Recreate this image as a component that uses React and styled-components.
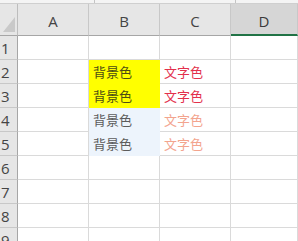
import React from 'react'
import styled, { createGlobalStyle } from 'styled-components'

const GlobalStyle = createGlobalStyle`
  html, body {
    margin: 0;
    padding: 0;
    background: #ffffff;
    overflow: hidden;
  }
`

const columns = ['A', 'B', 'C', 'D']

// only B and C hold content
const cells = {
  2: { B: { text: '背景色', bg: '#ffff00', color: '#4d4d14' }, C: { text: '文字色', color: '#e3304c' } },
  3: { B: { text: '背景色', bg: '#ffff00', color: '#4d4d14' }, C: { text: '文字色', color: '#e3304c' } },
  4: { B: { text: '背景色', bg: '#edf4fc', color: '#5c5c5c' }, C: { text: '文字色', color: '#f3a48e' } },
  5: { B: { text: '背景色', bg: '#edf4fc', color: '#5c5c5c' }, C: { text: '文字色', color: '#f3a48e' } }
}

const rows = [1, 2, 3, 4, 5, 6, 7, 8, 9]

const App = () => (
  <Sheet>
    <GlobalStyle />
    <TopStrip>
      <Tick style={{ left: 94 }} />
      <Tick style={{ left: 235 }} />
    </TopStrip>
    <Grid>
      <Corner>
        <svg width="12" height="15" viewBox="0 0 12 15">
          <polygon points="12,0 12,15 0,15" fill="#c9c9c9" />
        </svg>
      </Corner>
      {columns.map(col => (
        <ColHeader key={col} selected={col === 'D'}>
          {col}
        </ColHeader>
      ))}
      {rows.map(row => (
        <React.Fragment key={row}>
          <RowHeader>{row}</RowHeader>
          {columns.map(col => {
            const cell = cells[row] && cells[row][col]
            return (
              <Cell key={col} fill={cell && cell.bg} ink={cell && cell.color}>
                {cell ? cell.text : ''}
              </Cell>
            )
          })}
        </React.Fragment>
      ))}
    </Grid>
  </Sheet>
)

const Sheet = styled.div`
  width: 298px;
  height: 241px;
  overflow: hidden;
  background: #ffffff;
`

const TopStrip = styled.div`
  position: relative;
  height: 3px;
  background: #f4f4f4;
  border-bottom: 1px solid #cfcfcf;
`

const Tick = styled.span`
  position: absolute;
  top: 0;
  width: 1px;
  height: 3px;
  background: #c4c4c4;
`

const Grid = styled.div`
  display: grid;
  grid-template-columns: 18px 71px 71px 71px 1fr;
  grid-template-rows: 32px;
  grid-auto-rows: 24px;
  font-family: 'Noto Sans CJK SC', 'Noto Sans', sans-serif;
`

const Corner = styled.div`
  display: flex;
  align-items: flex-end;
  justify-content: flex-end;
  padding: 0 2px 3px 0;
  background: #e6e6e6;
  border-right: 1px solid #bdbdbd;
  border-bottom: 1px solid #a6a6a6;
`

const ColHeader = styled.div`
  display: flex;
  align-items: center;
  justify-content: center;
  padding-top: 3px;
  box-sizing: border-box;
  background: ${p => (p.selected ? '#d6d6d6' : '#e6e6e6')};
  border-right: 1px solid #c8c8c8;
  border-bottom: ${p => (p.selected ? '2px solid #217346' : '1px solid #a6a6a6')};
  color: ${p => (p.selected ? '#3a3a3a' : '#444444')};
  font-family: 'Open Sans', 'Liberation Sans', sans-serif;
  font-size: 15px;
`

const RowHeader = styled.div`
  display: flex;
  align-items: center;
  padding-left: 1px;
  box-sizing: border-box;
  background: #e6e6e6;
  border-right: 1px solid #a6a6a6;
  border-bottom: 1px solid #c8c8c8;
  color: #444444;
  font-family: 'Open Sans', 'Liberation Sans', sans-serif;
  font-size: 15px;
`

const Cell = styled.div`
  display: flex;
  align-items: center;
  padding-left: 4px;
  box-sizing: border-box;
  background: ${p => p.fill || '#ffffff'};
  border-right: 1px solid ${p => p.fill || '#dadada'};
  border-bottom: 1px solid ${p => p.fill || '#dadada'};
  color: ${p => p.ink || '#333333'};
  font-size: 13px;
  white-space: nowrap;
`

export default App
